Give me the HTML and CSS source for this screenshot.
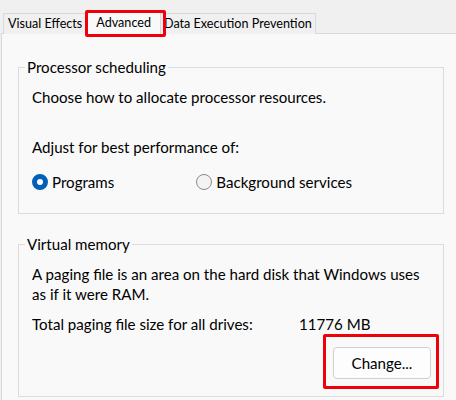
FILE: index.html
```html
<!DOCTYPE html>
<html>
<head>
<meta charset="utf-8">
<link rel="stylesheet" href="styles.css">
</head>
<body>
<div class="tabs">
  <div class="tab">Visual Effects</div>
  <div class="tab tab-active">Advanced<span class="mark mark-tab"></span></div>
  <div class="tab tab-dep">Data Execution Prevention</div>
</div>
<div class="panel">
  <fieldset class="group group-cpu">
    <legend>Processor scheduling</legend>
    <p class="line">Choose how to allocate processor resources.</p>
    <p class="line adjust">Adjust for best performance of:</p>
    <div class="radios">
      <label class="radio"><span class="dot dot-on"></span>Programs</label>
      <label class="radio radio-bg"><span class="dot"></span>Background services</label>
    </div>
  </fieldset>
  <fieldset class="group group-vm">
    <legend>Virtual memory</legend>
    <p class="line">A paging file is an area on the hard disk that Windows uses as if it were RAM.</p>
    <div class="line total"><span class="total-label">Total paging file size for all drives:</span><span>11776 MB</span></div>
    <div class="btn-row">
      <button class="btn">Change...<span class="mark mark-btn"></span></button>
    </div>
  </fieldset>
</div>
</body>
</html>
```

FILE: styles.css
```css
html, body {
  margin: 0;
  padding: 0;
}
body {
  width: 456px;
  height: 400px;
  overflow: hidden;
  background: #f0f0f0;
  font-family: "Lato", "Noto Sans", sans-serif;
  color: #000;
}
.tabs {
  display: flex;
  padding: 13px 0 0 3px;
  height: 20px;
  position: relative;
  z-index: 2;
}
.tab {
  box-sizing: border-box;
  height: 21px;
  padding: 0 4px;
  border: 1px solid #d9d9d9;
  border-bottom: none;
  background: #f0f0f0;
  font-size: 12.6px;
  line-height: 20px;
  color: #000;
  white-space: nowrap;
}
.tab + .tab {
  border-left: none;
}
.tab-active {
  position: relative;
  margin-top: -2px;
  height: 24px;
  padding: 0 9px;
  background: #f9f9f9;
  border-left: 1px solid #d9d9d9;
  line-height: 22px;
}
.tab-dep {
  padding: 0 3px 0 3px;
}
.mark {
  position: absolute;
  border: 3px solid #f0000a;
  border-radius: 2px;
  pointer-events: none;
}
.mark-tab {
  left: -2px;
  top: -2px;
  right: -6px;
  bottom: -2px;
}
.panel {
  box-sizing: border-box;
  margin-left: 1px;
  border-top: 1px solid #d9d9d9;
  border-left: 1px solid #d9d9d9;
  background: #f9f9f9;
  height: 367px;
  padding: 23px 0 0 16px;
}
.group {
  width: 426px;
  box-sizing: border-box;
  margin: 0;
  border: 1px solid #dcdcdc;
  padding: 0 12px 0 13px;
  font-size: 15.1px;
  line-height: 20px;
}
.group legend {
  padding: 0 2px;
  margin-left: -7px;
  line-height: 20px;
}
.line {
  margin: 0;
}
.group-cpu .line:first-of-type {
  margin-top: 10px;
}
.adjust {
  margin-top: 30px;
}
.radios {
  display: flex;
  margin-top: 15px;
  padding-bottom: 21px;
}
.radio {
  display: flex;
  align-items: center;
  gap: 4px;
  height: 20px;
}
.radio-bg {
  margin-left: 82px;
}
.dot {
  width: 16px;
  height: 16px;
  box-sizing: border-box;
  border-radius: 50%;
  border: 1px solid #8b8b8b;
  background: #f3f3f3;
}
.dot-on {
  border: 5px solid #005fb8;
  background: #ffffff;
}
.group-vm {
  margin-top: 20px;
}
.group-vm .line:first-of-type {
  margin-top: 10px;
}
.total {
  display: flex;
  margin-top: 10px;
}
.total-label {
  width: 267px;
}
.btn-row {
  display: flex;
  justify-content: flex-end;
  margin-top: 13px;
  padding-bottom: 17px;
}
.btn {
  position: relative;
  width: 98px;
  height: 32px;
  border: 1px solid #d0d0d0;
  border-radius: 4px;
  background: #fdfdfd;
  font-family: inherit;
  font-size: 15.1px;
  color: #000;
  padding: 0;
}
.mark-btn {
  left: -11px;
  top: -14px;
  right: -9px;
  bottom: -11px;
}
```
